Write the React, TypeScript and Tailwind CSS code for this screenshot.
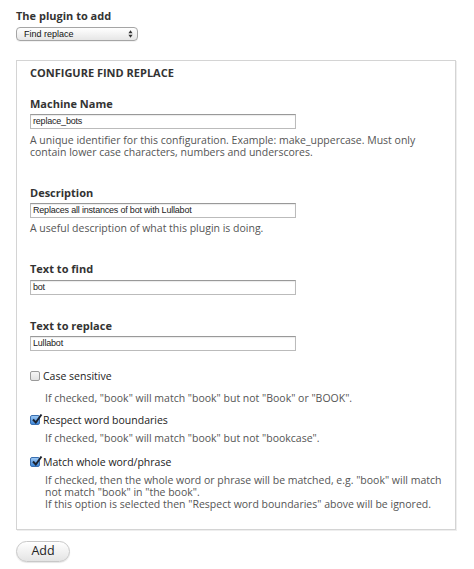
import React from "react";

const font = { fontFamily: '"Open Sans", "DejaVu Sans", sans-serif' };

const Label: React.FC<{ children: React.ReactNode; className?: string }> = ({ children, className }) => (
  <div className={`text-[11px] leading-[14px] font-bold text-[#333] ${className ?? ""}`}>{children}</div>
);

const TextInput: React.FC<{ value: string; className?: string }> = ({ value, className }) => (
  <div
    className={`w-[266px] h-[15px] border border-[#bbb] border-t-[#999] bg-white px-[2px] text-[9px] tracking-[-0.2px] leading-[13px] text-[#222] font-['Liberation_Sans',sans-serif] shadow-[inset_0_1px_1px_rgba(0,0,0,0.08)] ${className ?? ""}`}
  >
    {value}
  </div>
);

const Help: React.FC<{ children: React.ReactNode; className?: string }> = ({ children, className }) => (
  <div className={`text-[10.5px] leading-[12px] text-[#555] ${className ?? ""}`}>{children}</div>
);

const Checkbox: React.FC<{ checked?: boolean }> = ({ checked }) =>
  checked ? (
    <span className="relative w-[10px] h-[10px] rounded-[2px] border border-[#3a6fb0] bg-gradient-to-b from-[#9cc8f4] to-[#3c86d8] shrink-0">
      <svg viewBox="0 0 12 12" className="absolute left-[0px] top-[-3px] w-[12px] h-[12px]">
        <path d="M2 6.5 L4.8 9.5 L10.5 1.5" fill="none" stroke="#1a2230" strokeWidth="2" />
      </svg>
    </span>
  ) : (
    <span className="w-[10px] h-[10px] rounded-[2px] border border-[#9a9a9a] bg-gradient-to-b from-[#f6f6f6] to-[#e2e2e2] shrink-0" />
  );

const CheckRow: React.FC<{ checked?: boolean; label: string; className?: string }> = ({ checked, label, className }) => (
  <div className={`flex items-center gap-[3px] h-[14px] ${className ?? ""}`}>
    <Checkbox checked={checked} />
    <span className="text-[10.5px] leading-[14px] text-[#222]">{label}</span>
  </div>
);

export default function App() {
  return (
    <div className="bg-white w-[474px] h-[569px] px-[16px] pt-[9px]" style={font}>
      <Label>The plugin to add</Label>
      <div className="mt-[4px] w-[122px] h-[14px] rounded-[4px] border border-[#a5a5a5] bg-gradient-to-b from-white to-[#e6e6e6] flex items-center justify-between pl-[7px] pr-[4px] shadow-[0_1px_0_rgba(0,0,0,0.05)]">
        <span className="text-[9px] leading-[12px] text-[#111] font-['Liberation_Sans',sans-serif]">Find replace</span>
        <svg viewBox="0 0 6 9" className="w-[5px] h-[8px]">
          <path d="M3 0 L5.5 3.5 L0.5 3.5 Z M3 9 L5.5 5.5 L0.5 5.5 Z" fill="#333" />
        </svg>
      </div>

      <div className="mt-[19px] w-[440px] border border-[#d4d4d4] shadow-[1px_1px_0_#eee] pl-[13px] pt-[5px] pb-[19px]">
        <Label className="text-[11.3px]">CONFIGURE FIND REPLACE</Label>

        <Label className="mt-[17px]">Machine Name</Label>
        <TextInput value="replace_bots" className="mt-[3px]" />
        <Help className="mt-[5px]">
          A unique identifier for this configuration. Example: make_uppercase. Must only
          <br />
          contain lower case characters, numbers and underscores.
        </Help>

        <Label className="mt-[28px]">Description</Label>
        <TextInput value="Replaces all instances of bot with Lullabot" className="mt-[3px]" />
        <Help className="mt-[4px]">A useful description of what this plugin is doing.</Help>

        <Label className="mt-[28px]">Text to find</Label>
        <TextInput value="bot" className="mt-[4px]" />

        <Label className="mt-[24px]">Text to replace</Label>
        <TextInput value="Lullabot" className="mt-[3px]" />

        <CheckRow label="Case sensitive" className="mt-[18px]" />
        <Help className="mt-[9px] pl-[15px]">If checked, "book" will match "book" but not "Book" or "BOOK".</Help>

        <CheckRow checked label="Respect word boundaries" className="mt-[9px]" />
        <Help className="mt-[5px] pl-[15px]">If checked, "book" will match "book" but not "bookcase".</Help>

        <CheckRow checked label="Match whole word/phrase" className="mt-[11px]" />
        <Help className="mt-[5px] pl-[15px]">
          If checked, then the whole word or phrase will be matched, e.g. "book" will match
          <br />
          not match "book" in "the book".
          <br />
          If this option is selected then "Respect word boundaries" above will be ignored.
        </Help>
      </div>

      <button className="mt-[11px] w-[54px] h-[21px] rounded-full border border-[#c8c8c8] bg-gradient-to-b from-white to-[#e4e4e4] text-[12.5px] text-[#222] shadow-[0_1px_1px_rgba(0,0,0,0.1)]">
        Add
      </button>
    </div>
  );
}
